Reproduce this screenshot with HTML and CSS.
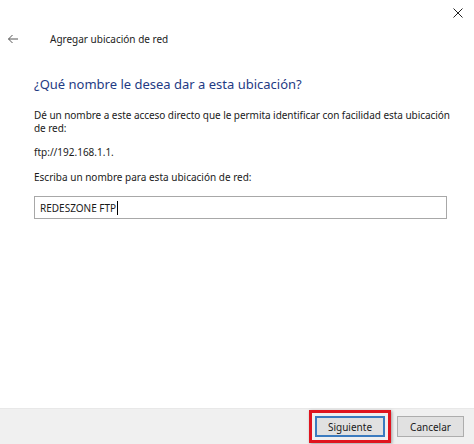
FILE: index.html
```html
<!DOCTYPE html>
<html lang="es">
<head>
<meta charset="utf-8">
<link rel="stylesheet" href="styles.css">
</head>
<body>
<div class="window">
  <div class="titlebar">
    <svg class="close" width="10" height="10" viewBox="0 0 10 10"><path d="M0.5 0.5 L9.5 9.5 M9.5 0.5 L0.5 9.5" stroke="#222" stroke-width="1" fill="none"/></svg>
  </div>
  <div class="header">
    <svg class="back" width="12" height="10" viewBox="0 0 12 10"><path d="M11 5 H1.5 M5.5 1 L1.5 5 L5.5 9" stroke="#555" stroke-width="1" fill="none"/></svg>
    <span class="wizard-title">Agregar ubicación de red</span>
  </div>
  <main class="content">
    <h1 class="heading">¿Qué nombre le desea dar a esta ubicación?</h1>
    <p class="text intro">Dé un nombre a este acceso directo que le permita identificar con facilidad esta ubicación de red:</p>
    <p class="text address">ftp://192.168.1.1.</p>
    <label class="text label">Escriba un nombre para esta ubicación de red:</label>
    <div class="input"><span>REDESZONE FTP</span><span class="caret"></span></div>
  </main>
  <footer class="footer">
    <div class="highlight"><button class="btn primary">Siguiente</button></div>
    <button class="btn">Cancelar</button>
  </footer>
</div>
</body>
</html>
```
FILE: styles.css
```css
html, body {
  margin: 0;
  padding: 0;
  background: #fff;
}
.window {
  width: 474px;
  height: 444px;
  display: flex;
  flex-direction: column;
  font-family: "Noto Sans", "Open Sans", sans-serif;
  color: #1a1a1a;
  font-size: 10px;
}
.titlebar {
  height: 26px;
  display: flex;
  justify-content: flex-end;
  align-items: center;
  padding-right: 11px;
}
.close {
  display: block;
}
.header {
  height: 25px;
  display: flex;
  align-items: center;
  padding-left: 7px;
}
.back {
  display: block;
  margin-right: 31px;
}
.wizard-title {
  font-size: 10px;
  color: #222;
}
.content {
  flex: 1;
  padding: 0 27px 0 34px;
}
.heading {
  margin: 23px 0 0 0;
  font-size: 13px;
  font-weight: normal;
  color: #1f3b84;
  line-height: 20px;
}
.text {
  margin: 15px 0 0 0;
  line-height: 13px;
}
.intro {
  margin-right: -12px;
  letter-spacing: -0.05px;
}
.address {
  margin-top: 11px;
}
.label {
  display: block;
  margin-top: 12px;
}
.input {
  margin-top: 12px;
  height: 21px;
  border: 1px solid #a8a8a8;
  display: flex;
  align-items: center;
  padding-left: 5px;
  font-size: 10px;
}
.caret {
  width: 1px;
  height: 14px;
  background: #000;
  margin-left: 1px;
}
.footer {
  height: 35px;
  background: #f0f0f0;
  border-top: 1px solid #e8e8e8;
  display: flex;
  align-items: center;
  justify-content: flex-end;
  padding-right: 10px;
  gap: 6px;
}
.highlight {
  border: 3px solid #e0141e;
  padding: 3px;
  box-shadow: 1px 1px 3px rgba(0,0,0,0.35);
}
.btn {
  font-family: "Noto Sans", "Open Sans", sans-serif;
  font-size: 10px;
  color: #1a1a1a;
  background: #e1e1e1;
  border: 1px solid #adadad;
  width: 67px;
  height: 21px;
  padding: 0;
  display: block;
}
.primary {
  width: 70px;
  border: 2px solid #3b7bbf;
}
```
